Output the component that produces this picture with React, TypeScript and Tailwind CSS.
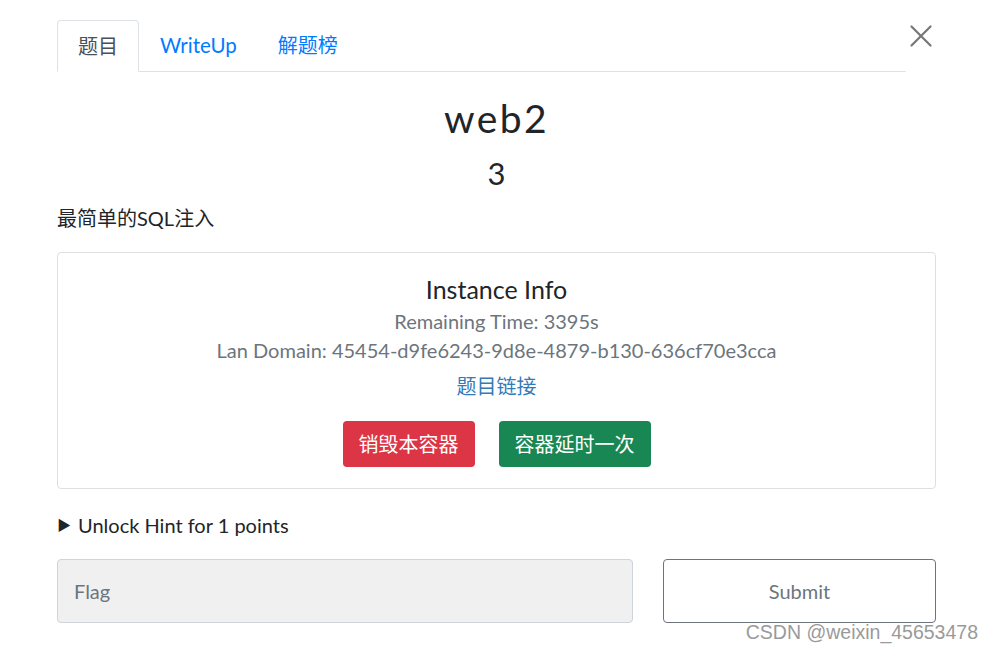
import React from 'react';

function CloseIcon() {
  return (
    <svg width="24" height="24" viewBox="0 0 24 24" fill="none" stroke="#777" strokeWidth="2.2" strokeLinecap="round">
      <path d="M2.5 2.5L21.5 21.5" />
      <path d="M21.5 2.5L2.5 21.5" />
    </svg>
  );
}

export default function App() {
  return (
    <div
      className="relative min-h-[651px] w-full bg-white text-[#212529]"
      style={{ fontFamily: 'Lato, "Noto Sans CJK SC", sans-serif' }}
    >
      <div className="mx-[57px] pt-[20px]">
        {/* Tabs */}
        <div className="flex items-start">
          <ul className="flex flex-1 border-b border-[#dee2e6]">
            <li className="-mb-px rounded-t-[4px] border border-[#dee2e6] border-b-white bg-white px-[20px] py-[10px] text-[20px] leading-[30px] text-[#495057]">
              题目
            </li>
            <li className="px-[21px] py-[10px] text-[20.5px] leading-[30px] text-[#007bff]">WriteUp</li>
            <li className="px-[20px] py-[10px] text-[20px] leading-[30px] text-[#007bff]">解题榜</li>
          </ul>
          <button className="flex h-[30px] w-[30px] items-center justify-center pt-[1px]">
            <CloseIcon />
          </button>
        </div>

        {/* Title */}
        <h1 className="mt-[25px] text-center text-[39px] leading-[43px] tracking-[0.06em]">web2</h1>
        <h2 className="mt-[15px] text-center text-[31px] leading-[36px]">3</h2>
        <p className="mt-[12px] text-[20px] leading-[30px]">最简单的SQL注入</p>

        {/* Instance card */}
        <div className="mt-[19px] flex flex-col items-center rounded-[4px] border border-[#dfdfdf] pb-[21px] pt-[22px]">
          <h3 className="text-[25px] leading-[29px]">Instance Info</h3>
          <p className="mt-[3px] text-[20px] leading-[29px] text-[#6c757d]">Remaining Time: 3395s</p>
          <p className="text-[20px] leading-[29px] text-[#6c757d]">
            Lan Domain: 45454-d9fe6243-9d8e-4879-b130-636cf70e3cca
          </p>
          <a className="mt-[6px] text-[20px] leading-[30px] text-[#337ab7]">题目链接</a>
          <div className="mt-[20px] flex gap-[24px]">
            <button className="h-[46px] rounded-[4px] bg-[#dc3545] px-[16px] text-[20px] text-white">
              销毁本容器
            </button>
            <button className="h-[46px] rounded-[4px] bg-[#198754] px-[16px] text-[20px] text-white">
              容器延时一次
            </button>
          </div>
        </div>

        {/* Hint */}
        <div className="mt-[21px] flex items-center gap-[7px] text-[20px] leading-[30px]">
          <span className="text-[14px] leading-none">▶</span>
          <span>Unlock Hint for 1 points</span>
        </div>

        {/* Flag form */}
        <div className="mt-[19px] flex gap-[30px]">
          <div className="flex h-[64px] flex-1 items-center rounded-[4px] border border-[#ced4da] bg-[#f0f0f0] px-[16px] text-[20px] text-[#6c757d]">
            Flag
          </div>
          <button className="h-[64px] w-[273px] rounded-[4px] border border-[#6c757d] bg-white text-[20px] text-[#6c757d]">
            Submit
          </button>
        </div>
      </div>

      <div
        className="absolute right-[15px] top-[619px] text-[19.5px] leading-[26px] text-[#9a9a9a]"
        style={{ fontFamily: '"Liberation Sans", sans-serif' }}
      >
        CSDN @weixin_45653478
      </div>
    </div>
  );
}
